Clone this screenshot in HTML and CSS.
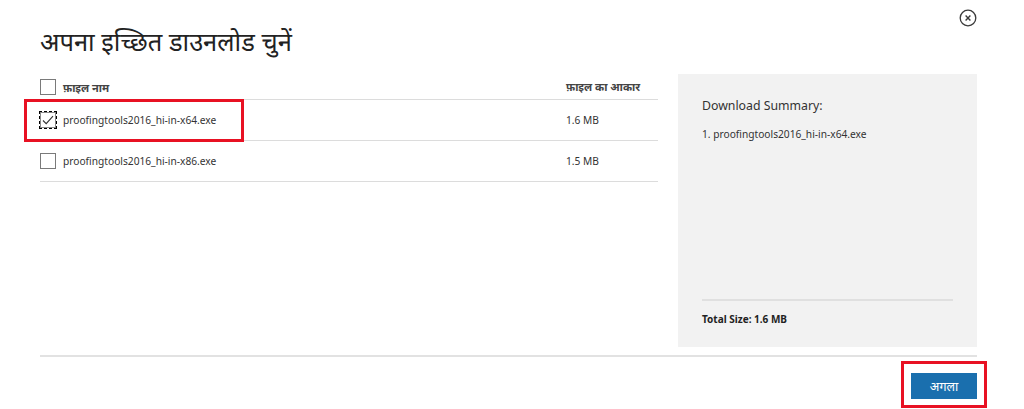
FILE: index.html
```html
<!DOCTYPE html>
<html lang="hi">
<head>
<meta charset="utf-8">
<link rel="stylesheet" href="styles.css">
</head>
<body>
<div class="dialog">
  <button class="close" aria-label="close">
    <svg width="20" height="20" viewBox="0 0 20 20"><circle cx="10" cy="10" r="7.8" fill="none" stroke="#3a3a3a" stroke-width="1.3"/><path d="M7.6 7.6 L12.4 12.4 M12.4 7.6 L7.6 12.4" stroke="#3a3a3a" stroke-width="1.4"/></svg>
  </button>
  <h1 class="title">अपना इच्छित डाउनलोड चुनें</h1>
  <div class="main">
    <div class="table">
      <div class="row head">
        <span class="cell-name"><span class="box"></span><span class="label">फ़ाइल नाम</span></span>
        <span class="cell-size">फ़ाइल का आकार</span>
      </div>
      <div class="row">
        <span class="highlight"></span>
        <span class="cell-name"><span class="box checked focus"><svg width="14" height="14" viewBox="0 0 14 14"><path d="M2 7.5 L5.2 10.6 L12 3.2" fill="none" stroke="#333" stroke-width="1.1"/></svg></span><span class="label file">proofingtools2016_hi-in-x64.exe</span></span>
        <span class="cell-size file">1.6 MB</span>
      </div>
      <div class="row">
        <span class="cell-name"><span class="box"></span><span class="label file">proofingtools2016_hi-in-x86.exe</span></span>
        <span class="cell-size file">1.5 MB</span>
      </div>
    </div>
    <aside class="summary">
      <div class="summary-top">
        <h2 class="summary-title">Download Summary:</h2>
        <p class="summary-item">1. proofingtools2016_hi-in-x64.exe</p>
      </div>
      <div class="summary-bottom">Total Size: 1.6 MB</div>
    </aside>
  </div>
  <div class="footer">
    <div class="btn-wrap"><button class="next">अगला</button></div>
  </div>
</div>
</body>
</html>
```
FILE: styles.css
```css
* { box-sizing: border-box; }
html, body { margin: 0; padding: 0; background: #fff; }
body {
  font-family: "Segoe UI", "Noto Sans", "Open Sans", "DejaVu Sans", sans-serif;
  color: #333;
  width: 1024px;
  height: 409px;
  overflow: hidden;
}
.dialog {
  position: relative;
  padding: 0 47px 0 40px;
}
.close {
  position: absolute;
  top: 8px;
  left: 958px;
  width: 20px;
  height: 20px;
  padding: 0;
  border: 0;
  background: none;
}
.title {
  margin: 0;
  padding-top: 23px;
  height: 74px;
  font-size: 25.5px;
  font-weight: 400;
  line-height: 36px;
  color: #222;
}
.main {
  display: flex;
  gap: 20px;
  height: 273px;
}
.table {
  width: 618px;
  font-size: 11px;
}
.row {
  position: relative;
  display: flex;
  align-items: center;
  height: 41px;
  border-bottom: 1px solid #dcdcdc;
}
.row.head {
  height: 26px;
  align-items: flex-start;
  padding-top: 5px;
  font-weight: 700;
  color: #444;
}
.file { font-size: 10.2px; }
.cell-name {
  display: flex;
  align-items: center;
  flex: 1;
}
.cell-size {
  width: 92px;
}
.label { margin-left: 7px; }
.box {
  width: 16px;
  height: 16px;
  border: 1px solid #7a7a7a;
  background: #fff;
  display: flex;
  align-items: center;
  justify-content: center;
}
.box.focus {
  outline: 1px dashed #000;
  outline-offset: 0;
  border: 1px solid #888;
}
.highlight {
  position: absolute;
  left: -16px;
  top: -1px;
  width: 220px;
  height: 43px;
  border: 3px solid #e81123;
  pointer-events: none;
}
.summary {
  width: 299px;
  background: #f2f2f2;
  padding: 22px 24px 0 24px;
  display: flex;
  flex-direction: column;
  justify-content: space-between;
}
.summary-title {
  margin: 0;
  font-size: 12.3px;
  font-weight: 400;
  color: #333;
  line-height: 20px;
}
.summary-item {
  margin: 10px 0 0;
  font-size: 10.2px;
  line-height: 16px;
}
.summary-bottom {
  border-top: 2px solid #e0e0e0;
  padding-top: 11px;
  height: 48px;
  font-size: 10px;
  font-weight: 700;
  color: #222;
}
.footer {
  margin-top: 8px;
  border-top: 2px solid #e2e2e2;
  display: flex;
  justify-content: flex-end;
  padding-top: 4px;
}
.btn-wrap {
  border: 3px solid #e81123;
  padding: 9px 7px 6px 7px;
  margin-right: -10px;
}
.next {
  display: block;
  width: 66px;
  height: 26px;
  border: 0;
  background: #1a6fae;
  color: #fff;
  font-family: inherit;
  font-size: 12.5px;
  padding: 0;
}
```
